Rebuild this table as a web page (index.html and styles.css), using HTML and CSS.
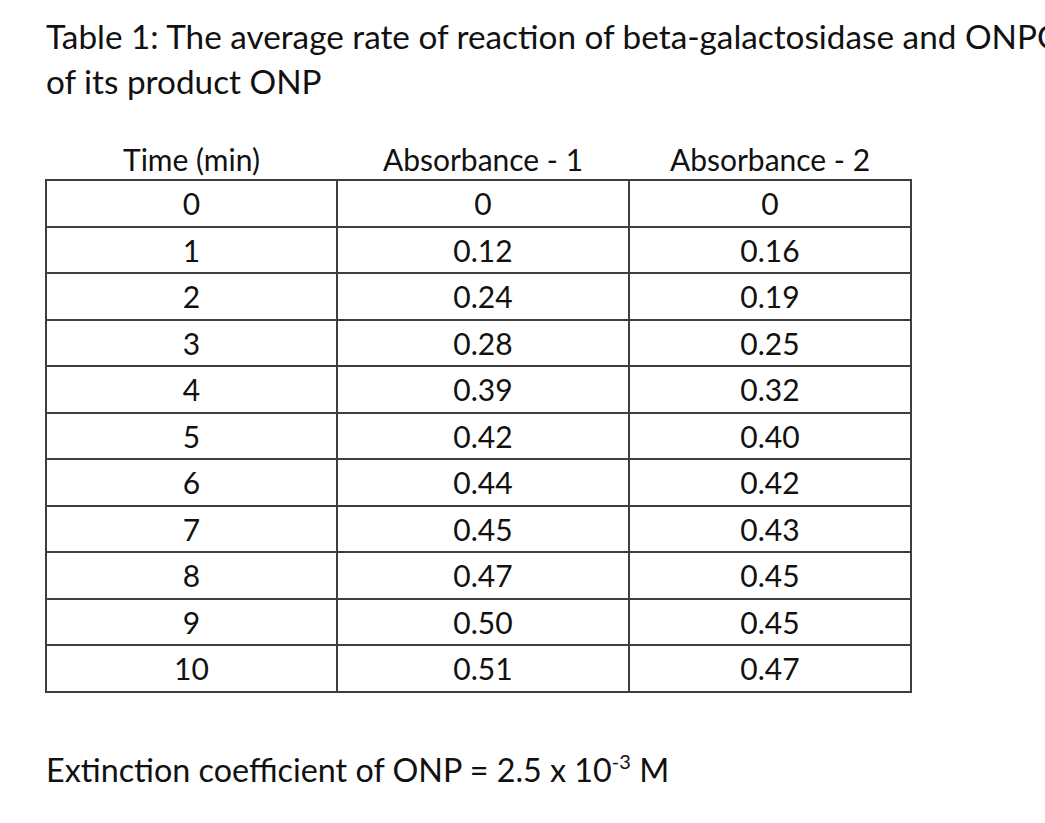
FILE: index.html
```html
<!DOCTYPE html>
<html>
<head>
<meta charset="utf-8">
<link rel="stylesheet" href="styles.css">
</head>
<body>
<div class="page">
  <p class="title">Table 1: The average rate of reaction of beta-galactosidase and ONPG in terms<br>of its product ONP</p>
  <table class="data">
    <thead>
      <tr><th class="c1">Time (min)</th><th class="c2">Absorbance - 1</th><th class="c3">Absorbance - 2</th></tr>
    </thead>
    <tbody>
      <tr><td>0</td><td>0</td><td>0</td></tr>
      <tr><td>1</td><td>0.12</td><td>0.16</td></tr>
      <tr><td>2</td><td>0.24</td><td>0.19</td></tr>
      <tr><td>3</td><td>0.28</td><td>0.25</td></tr>
      <tr><td>4</td><td>0.39</td><td>0.32</td></tr>
      <tr><td>5</td><td>0.42</td><td>0.40</td></tr>
      <tr><td>6</td><td>0.44</td><td>0.42</td></tr>
      <tr><td>7</td><td>0.45</td><td>0.43</td></tr>
      <tr><td>8</td><td>0.47</td><td>0.45</td></tr>
      <tr><td>9</td><td>0.50</td><td>0.45</td></tr>
      <tr><td>10</td><td>0.51</td><td>0.47</td></tr>
    </tbody>
  </table>
  <p class="note">Extinction coefficient of ONP = 2.5 x 10<sup>-3</sup> M</p>
</div>
</body>
</html>
```
FILE: styles.css
```css
html, body {
  margin: 0;
  padding: 0;
  background: #fff;
  overflow: hidden;
}
.page {
  width: 1045px;
  height: 823px;
  overflow: hidden;
  font-family: Lato, "Open Sans", sans-serif;
  color: #111;
  padding: 14px 0 0 46px;
  box-sizing: border-box;
}
.title {
  margin: 0;
  font-size: 33.3px;
  line-height: 45px;
  white-space: nowrap;
}
.data {
  margin: 31px 0 0 -1px;
  border-collapse: collapse;
  font-size: 30px;
}
.data th {
  font-weight: normal;
  height: 40px;
  padding: 0 0 4px 0;
  vertical-align: bottom;
  line-height: 32px;
  text-align: center;
}
.c1 { width: 291px; }
.c2 { width: 292px; }
.c3 { width: 282px; }
.data td {
  border: 2px solid #3e3e3e;
  height: 44.5px;
  padding: 0;
  text-align: center;
  line-height: 32px;
}
.note {
  margin: 57px 0 0 0;
  font-size: 32.3px;
  line-height: 40px;
}
.note sup {
  font-size: 20px;
  line-height: 0;
  vertical-align: 13px;
}
```
